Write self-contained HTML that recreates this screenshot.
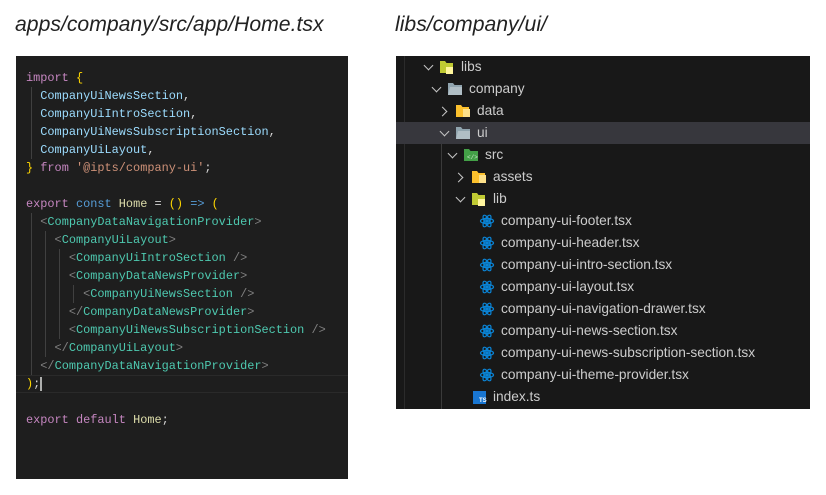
<!DOCTYPE html>
<html><head><meta charset="utf-8"><style>
body{margin:0;width:826px;height:495px;background:#fff;position:relative;overflow:hidden;font-family:"Liberation Sans",sans-serif}
.t{position:absolute;top:13px;font-style:italic;font-size:21.2px;color:#222}
#code{position:absolute;left:16px;top:56px;width:332px;height:423px;background:#1e1e1e}
.l{position:absolute;left:10px;height:18px;line-height:18px;font-family:"Liberation Mono",monospace;font-size:11.9px;white-space:pre;color:#d4d4d4}
.k{color:#c586c0}.b{color:#9cdcfe}.y{color:#ffd700}.s{color:#ce9178}.c{color:#569cd6}.f{color:#dcdcaa}.g{color:#4ec9b0}.p{color:#808080}
.v{position:absolute;width:1px;background:#404040}
#tree{position:absolute;left:396px;top:56px;width:414px;height:353px;background:#181818}
.r{position:absolute;left:0;width:414px;height:22px;line-height:22px;font-size:13.7px;color:#cccccc}
.r span{position:absolute}
.ch{position:absolute;width:6px;height:6px;border-right:1.4px solid #c5c5c5;border-bottom:1.4px solid #c5c5c5}
.dn{transform:rotate(45deg);top:6px}
.rt{transform:rotate(-45deg);top:8px}
</style></head><body>
<div class="t" style="left:15px">apps/company/src/app/Home.tsx</div>
<div class="t" style="left:395px">libs/company/ui/</div>
<div id="code">
<div class="v" style="left:15px;top:31px;height:72px"></div>
<div class="v" style="left:15px;top:157px;height:162px"></div>
<div class="v" style="left:29px;top:175px;height:126px"></div>
<div class="v" style="left:43px;top:193px;height:90px"></div>
<div class="v" style="left:57px;top:229px;height:18px"></div>
<div style="position:absolute;left:0;top:319px;width:332px;height:18px;border-top:1px solid #2a2a2a;border-bottom:1px solid #2a2a2a;box-sizing:border-box"></div>
<div class="l" style="top:13px"><span class="k">import</span> <span class="y">{</span></div>
<div class="l" style="top:31px">  <span class="b">CompanyUiNewsSection</span>,</div>
<div class="l" style="top:49px">  <span class="b">CompanyUiIntroSection</span>,</div>
<div class="l" style="top:67px">  <span class="b">CompanyUiNewsSubscriptionSection</span>,</div>
<div class="l" style="top:85px">  <span class="b">CompanyUiLayout</span>,</div>
<div class="l" style="top:103px"><span class="y">}</span> <span class="k">from</span> <span class="s">'@ipts/company-ui'</span>;</div>
<div class="l" style="top:139px"><span class="k">export</span> <span class="c">const</span> <span class="f">Home</span> = <span class="y">()</span> <span class="c">=&gt;</span> <span class="y">(</span></div>
<div class="l" style="top:157px">  <span class="p">&lt;</span><span class="g">CompanyDataNavigationProvider</span><span class="p">&gt;</span></div>
<div class="l" style="top:175px">    <span class="p">&lt;</span><span class="g">CompanyUiLayout</span><span class="p">&gt;</span></div>
<div class="l" style="top:193px">      <span class="p">&lt;</span><span class="g">CompanyUiIntroSection</span> <span class="p">/&gt;</span></div>
<div class="l" style="top:211px">      <span class="p">&lt;</span><span class="g">CompanyDataNewsProvider</span><span class="p">&gt;</span></div>
<div class="l" style="top:229px">        <span class="p">&lt;</span><span class="g">CompanyUiNewsSection</span> <span class="p">/&gt;</span></div>
<div class="l" style="top:247px">      <span class="p">&lt;/</span><span class="g">CompanyDataNewsProvider</span><span class="p">&gt;</span></div>
<div class="l" style="top:265px">      <span class="p">&lt;</span><span class="g">CompanyUiNewsSubscriptionSection</span> <span class="p">/&gt;</span></div>
<div class="l" style="top:283px">    <span class="p">&lt;/</span><span class="g">CompanyUiLayout</span><span class="p">&gt;</span></div>
<div class="l" style="top:301px">  <span class="p">&lt;/</span><span class="g">CompanyDataNavigationProvider</span><span class="p">&gt;</span></div>
<div class="l" style="top:319px"><span class="y">)</span>;<span style="border-left:2px solid #aeafad"></span></div>
<div class="l" style="top:355px"><span class="k">export</span> <span class="k">default</span> <span class="f">Home</span>;</div>
</div>
<div id="tree">
<div class="v" style="left:8px;top:0;height:353px;background:#2b2b2b"></div>
<div class="v" style="left:45px;top:88px;height:265px;background:#3a3a3a"></div>
<div style="position:absolute;left:0;top:66px;width:414px;height:22px;background:#37373d"></div>
<svg width="414" height="353" style="position:absolute;left:0;top:0">
<defs>
<g id="re" fill="none" stroke="#0a84d6" stroke-width="1.2"><ellipse cx="0" cy="0" rx="6.5" ry="2.6"/><ellipse cx="0" cy="0" rx="6.5" ry="2.6" transform="rotate(60)"/><ellipse cx="0" cy="0" rx="6.5" ry="2.6" transform="rotate(120)"/><circle r="1.3" fill="#0a84d6"/></g>
</defs>
<path d="M44 5h5l1.5 2H57v10H44z" fill="#c0ca33"/><rect x="50" y="11" width="7" height="7" fill="#fff59d"/>
<path d="M52 27h5l1.5 2H66v10H52z" fill="#90a4ae"/><path d="M54 31h12v8H52z" fill="#b0bec5"/>
<path d="M60 49h5l1.5 2H73v10H60z" fill="#fbc02d"/><rect x="67" y="53" width="7" height="8" fill="#fde08a"/>
<path d="M60 71h5l1.5 2H74v10H60z" fill="#90a4ae"/><path d="M62 75h12v8H60z" fill="#b0bec5"/>
<path d="M68 93h5l1.5 2H82v10H68z" fill="#43a047"/><text x="71" y="103" font-size="6" fill="#c8e6c9" font-family="Liberation Mono">&lt;/&gt;</text>
<path d="M76 115h5l1.5 2H89v10H76z" fill="#fbc02d"/><rect x="83" y="119" width="7" height="8" fill="#fde08a"/>
<path d="M76 137h5l1.5 2H89v10H76z" fill="#c0ca33"/><rect x="82" y="143" width="7" height="7" fill="#fff59d"/>
<use href="#re" x="91" y="165"/><use href="#re" x="91" y="187"/><use href="#re" x="91" y="209"/><use href="#re" x="91" y="231"/><use href="#re" x="91" y="253"/><use href="#re" x="91" y="275"/><use href="#re" x="91" y="297"/><use href="#re" x="91" y="319"/>
<rect x="77" y="335" width="13" height="13" fill="#1976d2"/><text x="83" y="346" font-size="6" fill="#fff" font-family="Liberation Sans" font-weight="bold">TS</text>
</svg>
<div class="r" style="top:0"><i class="ch dn" style="left:29px"></i><span style="left:65px">libs</span></div>
<div class="r" style="top:22px"><i class="ch dn" style="left:37px"></i><span style="left:73px">company</span></div>
<div class="r" style="top:44px"><i class="ch rt" style="left:43px"></i><span style="left:81px">data</span></div>
<div class="r" style="top:66px"><i class="ch dn" style="left:45px"></i><span style="left:81px">ui</span></div>
<div class="r" style="top:88px"><i class="ch dn" style="left:53px"></i><span style="left:89px">src</span></div>
<div class="r" style="top:110px"><i class="ch rt" style="left:59px"></i><span style="left:97px">assets</span></div>
<div class="r" style="top:132px"><i class="ch dn" style="left:61px"></i><span style="left:97px">lib</span></div>
<div class="r" style="top:154px"><span style="left:105px">company-ui-footer.tsx</span></div>
<div class="r" style="top:176px"><span style="left:105px">company-ui-header.tsx</span></div>
<div class="r" style="top:198px"><span style="left:105px">company-ui-intro-section.tsx</span></div>
<div class="r" style="top:220px"><span style="left:105px">company-ui-layout.tsx</span></div>
<div class="r" style="top:242px"><span style="left:105px">company-ui-navigation-drawer.tsx</span></div>
<div class="r" style="top:264px"><span style="left:105px">company-ui-news-section.tsx</span></div>
<div class="r" style="top:286px"><span style="left:105px">company-ui-news-subscription-section.tsx</span></div>
<div class="r" style="top:308px"><span style="left:105px">company-ui-theme-provider.tsx</span></div>
<div class="r" style="top:330px"><span style="left:97px">index.ts</span></div>
</div>
</body></html>
